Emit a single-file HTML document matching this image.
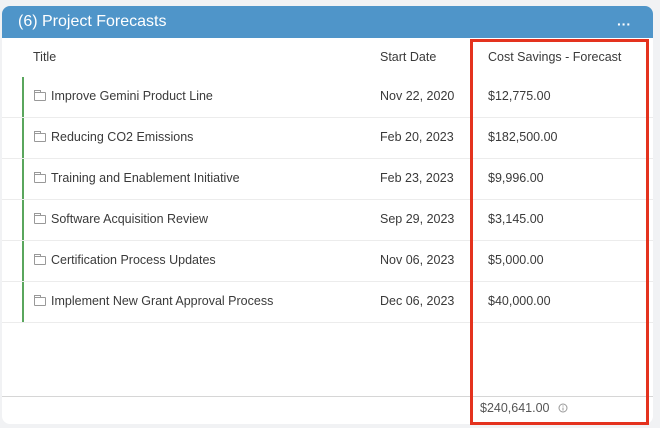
<!DOCTYPE html>
<html><head><style>
*{margin:0;padding:0;box-sizing:border-box}
body{width:660px;height:428px;background:#f1f2f4;font-family:"Liberation Sans",sans-serif;position:relative;overflow:hidden}
.panel{position:absolute;left:2px;top:6px;width:651px;height:418px;background:#fff;border-radius:8px;overflow:hidden}
.hdr{height:32px;background:#4f95c9;color:#fff;font-size:16px;line-height:32px;padding-left:16px}
.dots{position:absolute;right:22px;top:13px;color:#fff;font-size:14px;line-height:10px;font-weight:bold}
.t{position:absolute;font-size:12.5px;color:#3a3a3a;white-space:nowrap}
.line{position:absolute;left:0;width:651px;height:1px;background:#ececec}
.fold{position:absolute;width:12px;height:9px;border:1px solid #999;border-radius:1px}
.fold:before{content:"";position:absolute;left:-1px;top:-3px;width:5px;height:2px;border:1px solid #999;border-bottom:none}
</style></head><body>
<div class="panel">
<div class="hdr">(6) Project Forecasts</div>
<div class="dots">···</div>
</div>
<div class="t" style="left:33px;top:50px">Title</div>
<div class="t" style="left:380px;top:50px">Start Date</div>
<div class="t" style="left:488px;top:50px">Cost Savings - Forecast</div>
<div style="position:absolute;left:22px;top:77px;width:2px;height:245px;background:#5aa65d"></div>

<div class="line" style="top:117px;left:2px"></div>
<div class="line" style="top:158px;left:2px"></div>
<div class="line" style="top:199px;left:2px"></div>
<div class="line" style="top:240px;left:2px"></div>
<div class="line" style="top:281px;left:2px"></div>
<div class="line" style="top:322px;left:2px"></div>
<div class="line" style="top:396px;left:2px;background:#d6d6d6"></div>

<div class="fold" style="left:34px;top:92px"></div><div class="t" style="left:51px;top:89px">Improve Gemini Product Line</div><div class="t" style="left:380px;top:89px">Nov 22, 2020</div><div class="t" style="left:488px;top:89px">$12,775.00</div>
<div class="fold" style="left:34px;top:133px"></div><div class="t" style="left:51px;top:130px">Reducing CO2 Emissions</div><div class="t" style="left:380px;top:130px">Feb 20, 2023</div><div class="t" style="left:488px;top:130px">$182,500.00</div>
<div class="fold" style="left:34px;top:174px"></div><div class="t" style="left:51px;top:171px">Training and Enablement Initiative</div><div class="t" style="left:380px;top:171px">Feb 23, 2023</div><div class="t" style="left:488px;top:171px">$9,996.00</div>
<div class="fold" style="left:34px;top:215px"></div><div class="t" style="left:51px;top:212px">Software Acquisition Review</div><div class="t" style="left:380px;top:212px">Sep 29, 2023</div><div class="t" style="left:488px;top:212px">$3,145.00</div>
<div class="fold" style="left:34px;top:256px"></div><div class="t" style="left:51px;top:253px">Certification Process Updates</div><div class="t" style="left:380px;top:253px">Nov 06, 2023</div><div class="t" style="left:488px;top:253px">$5,000.00</div>
<div class="fold" style="left:34px;top:297px"></div><div class="t" style="left:51px;top:294px">Implement New Grant Approval Process</div><div class="t" style="left:380px;top:294px">Dec 06, 2023</div><div class="t" style="left:488px;top:294px">$40,000.00</div>

<div class="t" style="left:480px;top:401px;color:#555">$240,641.00</div>
<svg style="position:absolute;left:558px;top:403px" width="10" height="10" viewBox="0 0 10 10"><circle cx="5" cy="5" r="4" fill="none" stroke="#999" stroke-width="1"/><line x1="5" y1="4.5" x2="5" y2="7.5" stroke="#999"/><circle cx="5" cy="3" r="0.6" fill="#999"/></svg>
<div style="position:absolute;left:470px;top:39px;width:179px;height:386px;border:3px solid #e4321e"></div>
</body></html>
